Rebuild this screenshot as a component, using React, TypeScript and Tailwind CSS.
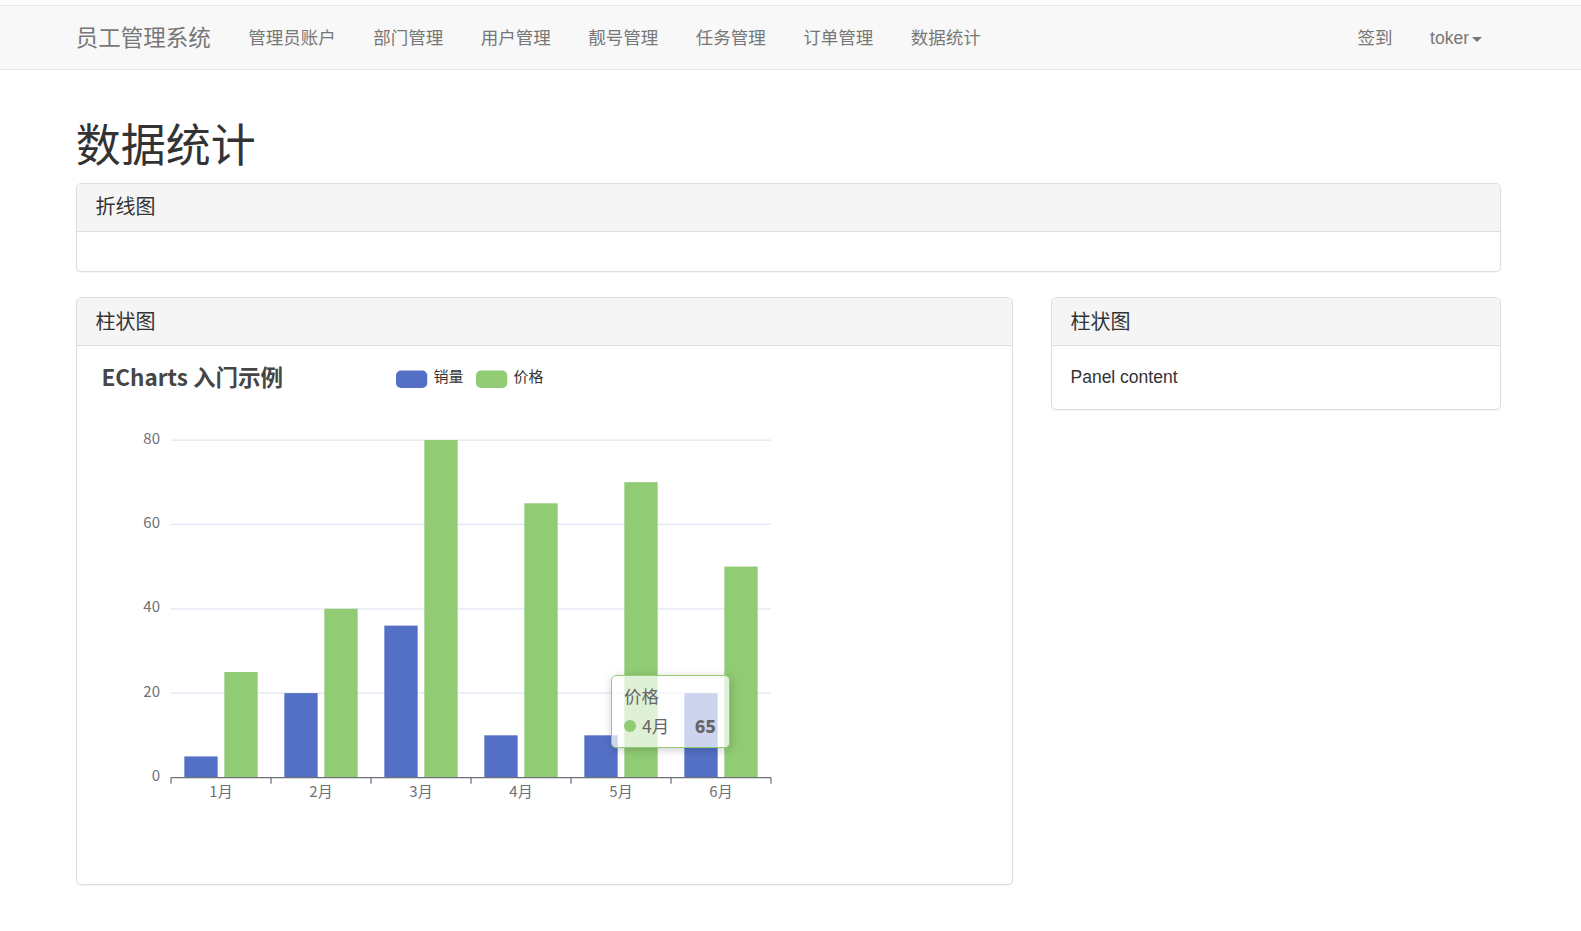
const navItems = ["管理员账户", "部门管理", "用户管理", "靓号管理", "任务管理", "订单管理", "数据统计"];

const months = ["1月", "2月", "3月", "4月", "5月", "6月"];
const sales = [5, 20, 36, 10, 10, 20];
const prices = [25, 40, 80, 65, 70, 50];

// grid box of the chart, in px inside the 750x500 canvas
const gl = 75;
const gr = 675;
const gt = 75;
const gb = 412.5;
const unit = (gb - gt) / 80;
const band = (gr - gl) / months.length;
const barW = 33.33;

function BarChart() {
  return (
    <div className="relative h-[500px] w-[750px] font-['Noto_Sans_CJK_SC','Noto_Sans',sans-serif]">
      <div className="absolute left-[6px] top-0 whitespace-nowrap text-[22.5px] font-bold leading-[22px] text-[#464646]">
        ECharts 入门示例
      </div>

      <svg width="750" height="500" viewBox="0 0 750 500">
        {/* legend */}
        <rect x="300" y="5.5" width="31.25" height="17.5" rx="5" fill="#5470c6" />
        <text x="337.5" y="13" dominantBaseline="middle" fontSize="15" fill="#333">
          销量
        </text>
        <rect x="380" y="5.5" width="31.25" height="17.5" rx="5" fill="#91cc75" />
        <text x="417.5" y="13" dominantBaseline="middle" fontSize="15" fill="#333">
          价格
        </text>

        {/* split lines + y labels */}
        {[80, 60, 40, 20, 0].map((v) => {
          const y = gb - v * unit;
          return (
            <g key={v}>
              {v > 0 && <line x1={gl} x2={gr} y1={y} y2={y} stroke="#E0E6F1" strokeWidth="1.25" />}
              <text x={gl - 11} y={y - 0.5} textAnchor="end" dominantBaseline="middle" fontSize="15" fill="#6E7079">
                {v}
              </text>
            </g>
          );
        })}

        {/* bars */}
        {months.map((m, i) => {
          const x0 = gl + i * band;
          return (
            <g key={m}>
              <rect x={x0 + 13.33} y={gb - sales[i] * unit} width={barW} height={sales[i] * unit} fill="#5470c6" />
              <rect x={x0 + 53.33} y={gb - prices[i] * unit} width={barW} height={prices[i] * unit} fill="#91cc75" />
              <text x={x0 + band / 2} y={gb + 15.5} textAnchor="middle" dominantBaseline="middle" fontSize="15" fill="#6E7079">
                {m}
              </text>
            </g>
          );
        })}

        {/* x axis */}
        <line x1={gl} x2={gr} y1={gb} y2={gb} stroke="#6E7079" strokeWidth="1.25" />
        {Array.from({ length: months.length + 1 }).map((_, i) => (
          <line
            key={i}
            x1={gl + i * band}
            x2={gl + i * band}
            y1={gb}
            y2={gb + 6.25}
            stroke="#6E7079"
            strokeWidth="1.25"
          />
        ))}
      </svg>

      {/* tooltip */}
      <div className="absolute left-[515px] top-[310px] w-[119px] rounded-[5px] border border-[#91cc75] bg-white/70 px-[12.5px] pb-[13px] pt-[11px] text-[17.5px] leading-none text-[#666] shadow-[1px_2px_10px_rgba(0,0,0,0.2)]">
        <div>价格</div>
        <div className="mt-[12.5px] flex items-center">
          <span className="mr-[6px] inline-block h-[12px] w-[12px] rounded-full bg-[#91cc75]" />
          <span>4月</span>
          <span className="ml-auto font-black">65</span>
        </div>
      </div>
    </div>
  );
}

function Panel({ title, children, bodyClass = "" }: { title: string; children?: React.ReactNode; bodyClass?: string }) {
  return (
    <div className="overflow-hidden rounded-[5px] border border-[#ddd] bg-white shadow-[0_1px_1px_rgba(0,0,0,0.05)]">
      <div className="border-b border-[#ddd] bg-[#f5f5f5] px-[18.75px] py-[12.5px]">
        <h3 className="text-[20px] leading-[1.1] text-[#333]">{title}</h3>
      </div>
      <div className={`p-[18.75px] ${bodyClass}`}>{children}</div>
    </div>
  );
}

export default function App() {
  return (
    <div className="min-h-screen bg-white font-['Liberation_Sans','Noto_Sans_CJK_SC',sans-serif] text-[17.5px] leading-[25px] text-[#333]">
      <div className="h-[5px]" />

      <nav className="border-y border-[#e7e7e7] bg-[#f8f8f8]">
        <div className="ml-[57px] flex h-[62.5px] w-[1462.5px] items-center">
          <a className="px-[18.75px] pb-[18px] pt-[19.5px] text-[22.5px] leading-[25px] text-[#777]">员工管理系统</a>
          <ul className="flex">
            {navItems.map((item) => (
              <li key={item}>
                <a className="block px-[18.75px] pb-[18px] pt-[19.5px] text-[#777]">{item}</a>
              </li>
            ))}
          </ul>
          <ul className="ml-auto mr-[18.75px] flex">
            <li>
              <a className="block px-[18.75px] pb-[18px] pt-[19.5px] text-[#777]">签到</a>
            </li>
            <li>
              <a className="flex items-center px-[18.75px] pb-[18px] pt-[19.5px] text-[#777]">
                toker
                <span className="ml-[3px] mt-[2px] h-0 w-0 border-x-[5px] border-t-[5px] border-x-transparent border-t-[#777]" />
              </a>
            </li>
          </ul>
        </div>
      </nav>

      <main className="ml-[57px] w-[1462.5px] px-[18.75px] pt-[25px]">
        <h1 className="mb-[11px] mt-[27.5px] text-[45px] font-normal leading-[1.1] text-[#333]">数据统计</h1>

        <div className="mb-[25px]">
          <Panel title="折线图" bodyClass="h-[39.5px]" />
        </div>

        <div className="grid grid-cols-[937.5px_450px] items-start gap-[37.5px]">
          <Panel title="柱状图">
            <BarChart />
          </Panel>
          <Panel title="柱状图">Panel content</Panel>
        </div>
      </main>
    </div>
  );
}
